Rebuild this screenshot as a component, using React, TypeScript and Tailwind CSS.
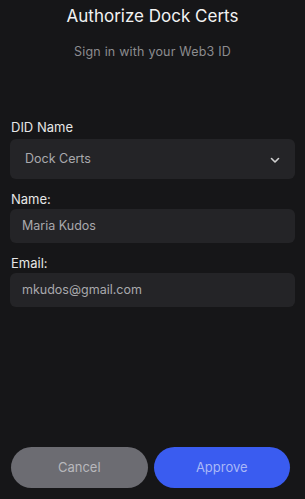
import React from "react";

export default function App() {
  return (
    <div
      className="w-[305px] h-[499px] bg-[#161618] flex flex-col"
      style={{ fontFamily: "Inter, 'Noto Sans', sans-serif" }}
    >
      <div className="flex flex-col items-center">
        <div className="mt-[4px] text-[17px] leading-[24px] text-[#f2f2f2]">Authorize Dock Certs</div>
        <div className="mt-[16px] text-[12.5px] leading-[16px] text-[#8c8c8f] tracking-[0.2px]">Sign in with your Web3 ID</div>
      </div>
      <div className="mt-[59px] px-[10px] flex flex-col">
        <div className="pl-[1px] text-[13px] leading-[16px] text-[#e6e6e6]">DID Name</div>
        <div className="mt-[4px] h-[40px] rounded-[6px] bg-[#242427] flex items-center justify-between pl-[15px] pr-[15px]">
          <span className="text-[12.5px] text-[#a9a9ad]">Dock Certs</span>
          <svg width="10" height="7" viewBox="0 0 10 7" className="mt-[3px]">
            <path d="M1.5 1.5 L5 5 L8.5 1.5" stroke="#d0d0d0" strokeWidth="1.6" fill="none" strokeLinecap="round" strokeLinejoin="round" />
          </svg>
        </div>
        <div className="mt-[12px] pl-[1px] text-[13px] leading-[16px] text-[#e6e6e6]">Name:</div>
        <div className="mt-[2px] h-[34px] rounded-[6px] bg-[#242427] flex items-center pl-[12px]">
          <span className="text-[12.5px] text-[#a9a9ad]">Maria Kudos</span>
        </div>
        <div className="mt-[12px] pl-[1px] text-[13px] leading-[16px] text-[#e6e6e6]">Email:</div>
        <div className="mt-[2px] h-[34px] rounded-[6px] bg-[#242427] flex items-center pl-[12px]">
          <span className="text-[12.5px] text-[#a9a9ad]">mkudos@gmail.com</span>
        </div>
      </div>
      <div className="mt-auto mb-[11px] flex gap-[6px] pl-[11px] pr-[15px]">
        <button className="flex-1 h-[41px] rounded-full bg-[#6c6c72] text-[13px] text-[#b8b8bc]">Cancel</button>
        <button className="flex-1 h-[41px] rounded-full bg-[#3a5cf0] text-[13px] text-[#a9b8f7]">Approve</button>
      </div>
    </div>
  );
}
